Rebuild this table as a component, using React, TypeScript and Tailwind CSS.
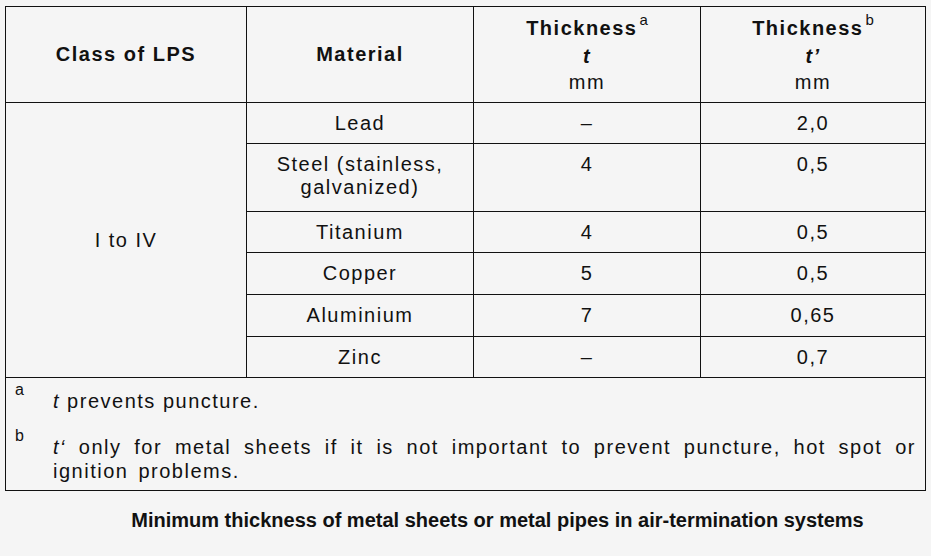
const rows = [
  { material: ["Lead"], t: "–", t2: "2,0" },
  { material: ["Steel (stainless,", "galvanized)"], t: "4", t2: "0,5" },
  { material: ["Titanium"], t: "4", t2: "0,5" },
  { material: ["Copper"], t: "5", t2: "0,5" },
  { material: ["Aluminium"], t: "7", t2: "0,65" },
  { material: ["Zinc"], t: "–", t2: "0,7" },
];

const cell = "bg-[#f5f5f5] text-center";

export default function App() {
  return (
    <div
      className="w-[931px] h-[556px] bg-[#f5f5f5] text-[#111] pt-[6px] pl-[5px]"
      style={{ fontFamily: '"Liberation Sans", Arial, sans-serif' }}
    >
      <div className="grid w-[921px] grid-cols-[240px_226px_226px_224px] grid-rows-[95px_40px_67px_40px_41px_41px_40px_112px] gap-px bg-[#111] p-px text-[20px] tracking-[1.5px]">
        {/* header */}
        <div className={`${cell} flex items-center justify-center font-bold leading-[23px]`}>Class of LPS</div>
        <div className={`${cell} flex items-center justify-center font-bold leading-[23px]`}>Material</div>
        <div className={`${cell} flex flex-col items-center justify-center leading-[26px]`}>
          <div className="font-bold">
            Thickness
            <span className="relative -top-[10px] ml-[2px] text-[15px] font-normal tracking-normal">a</span>
          </div>
          <div className="font-bold italic">t</div>
          <div>mm</div>
        </div>
        <div className={`${cell} flex flex-col items-center justify-center leading-[26px]`}>
          <div className="font-bold">
            Thickness
            <span className="relative -top-[10px] ml-[2px] text-[15px] font-normal tracking-normal">b</span>
          </div>
          <div className="font-bold italic">t’</div>
          <div>mm</div>
        </div>

        {/* body */}
        <div className={`${cell} row-span-6 flex items-center justify-center leading-[23px]`}>I to IV</div>
        {rows.map((r) => (
          <div key={r.material[0]} className="contents">
            <div className={`${cell} pt-[9px] leading-[23px]`}>
              {r.material.map((m) => (
                <div key={m}>{m}</div>
              ))}
            </div>
            <div className={`${cell} pt-[9px] leading-[23px]`}>{r.t}</div>
            <div className={`${cell} pt-[9px] leading-[23px]`}>{r.t2}</div>
          </div>
        ))}

        {/* footnotes */}
        <div className="col-span-4 bg-[#f5f5f5] pl-[9px] pr-[9px] pt-[11px] leading-6">
          <div className="flex">
            <span className="relative -top-[7px] w-[38px] shrink-0 text-[16px] leading-4 tracking-normal">a</span>
            <p><i>t</i> prevents puncture.</p>
          </div>
          <div className="mt-[22px] flex">
            <span className="relative -top-[7px] w-[38px] shrink-0 text-[16px] leading-4 tracking-normal">b</span>
            <p className="text-justify [word-spacing:3px]">
              <i>t‘</i> only for metal sheets if it is not important to prevent puncture, hot spot or ignition problems.
            </p>
          </div>
        </div>
      </div>

      <p className="mt-[17px] w-[921px] pl-[64px] text-center text-[20px] font-bold leading-6">
        Minimum thickness of metal sheets or metal pipes in air-termination systems
      </p>
    </div>
  );
}
